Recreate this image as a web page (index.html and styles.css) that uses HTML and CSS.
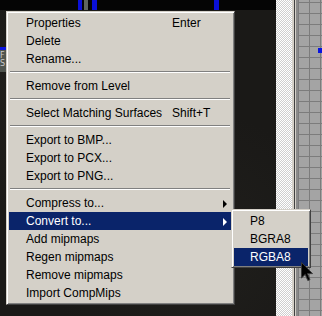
FILE: index.html
```html
<!DOCTYPE html>
<html>
<head>
<meta charset="utf-8">
<link rel="stylesheet" href="styles.css">
</head>
<body>
<div class="scene">
  <div class="viewport">
    <div class="topstrip">
      <span class="tb tb-blue1"></span>
      <span class="tb tb-gray"></span>
      <span class="tb tb-blue2"></span>
      <span class="tb tb-blue3"></span>
    </div>
    <div class="leftpanel"><span class="lp-text">F<br>S</span></div>
  </div>
  <div class="checker"></div>
  <div class="divider"><span class="dv dv-a"></span><span class="dv dv-b"></span><span class="dv dv-c"></span></div>
  <div class="gridpane"><span class="gp-blue"></span></div>
</div>

<div class="menu main-menu">
  <div class="item"><span class="label">Properties</span><span class="key">Enter</span></div>
  <div class="item"><span class="label">Delete</span></div>
  <div class="item"><span class="label">Rename...</span></div>
  <div class="sep"></div>
  <div class="item"><span class="label">Remove from Level</span></div>
  <div class="sep"></div>
  <div class="item"><span class="label">Select Matching Surfaces</span><span class="key">Shift+T</span></div>
  <div class="sep"></div>
  <div class="item"><span class="label">Export to BMP...</span></div>
  <div class="item"><span class="label">Export to PCX...</span></div>
  <div class="item"><span class="label">Export to PNG...</span></div>
  <div class="sep"></div>
  <div class="item"><span class="label">Compress to...</span><span class="arrow"></span></div>
  <div class="item active"><span class="label">Convert to...</span><span class="arrow"></span></div>
  <div class="item"><span class="label">Add mipmaps</span></div>
  <div class="item"><span class="label">Regen mipmaps</span></div>
  <div class="item"><span class="label">Remove mipmaps</span></div>
  <div class="item"><span class="label">Import CompMips</span></div>
</div>

<div class="menu sub-menu">
  <div class="item"><span class="label">P8</span></div>
  <div class="item"><span class="label">BGRA8</span></div>
  <div class="item active"><span class="label">RGBA8</span></div>
</div>

<svg class="cursor" width="12" height="20" viewBox="0 0 12 20">
  <path d="M0.5 0.5 L0.5 16 L4.2 12.4 L6.8 18.5 L9 17.6 L6.5 11.6 L11.5 11.6 Z" fill="#000" stroke="#3a3a3a" stroke-width="1"/>
</svg>
</body>
</html>
```

FILE: styles.css
```css
html, body {
  margin: 0;
  padding: 0;
  width: 322px;
  height: 316px;
  overflow: hidden;
  background: #1b1a18;
}

.scene {
  display: flex;
  width: 322px;
  height: 316px;
}

.viewport {
  flex: 0 0 276px;
  position: relative;
  background:
    radial-gradient(circle at 20% 30%, #22211e 0, transparent 40%),
    radial-gradient(circle at 70% 80%, #201f1c 0, transparent 45%),
    #1a1917;
}

.topstrip {
  height: 10px;
  background: #050505;
  position: relative;
}

.tb {
  position: absolute;
  top: 0;
  height: 10px;
}
.tb-blue1 { left: 78px; width: 4px; background: #0a10d8; }
.tb-gray  { left: 84px; width: 4px; background: #5f655f; }
.tb-blue2 { left: 92px; width: 5px; background: #0a10d8; }
.tb-blue3 { left: 214px; width: 5px; background: #0a10d8; }

.leftpanel {
  position: absolute;
  left: 0;
  top: 47px;
  width: 6px;
  height: 22px;
  background: #50554f;
  border-top: 3px solid #0a14e0;
  overflow: hidden;
}
.lp-text {
  display: block;
  font: 8px/8px "DejaVu Sans", sans-serif;
  color: #c8c8c8;
  margin-left: 0;
  padding-top: 2px;
}

.checker {
  flex: 0 0 16px;
  background-color: #ffffff;
  background-image:
    linear-gradient(45deg, #cfcfcf 25%, transparent 25%, transparent 75%, #cfcfcf 75%),
    linear-gradient(45deg, #cfcfcf 25%, transparent 25%, transparent 75%, #cfcfcf 75%);
  background-size: 2px 2px;
  background-position: 0 0, 1px 1px;
}

.divider {
  flex: 0 0 6px;
  display: flex;
  background: #d4d0c8;
}
.dv { display: block; height: 100%; }
.dv-a { width: 2px; background: #d4d0c8; }
.dv-b { width: 1px; background: #404040; }
.dv-c { width: 3px; background: #8a8a8a; border-left: 1px solid #d4d0c8; box-sizing: border-box; }

.gridpane {
  flex: 1;
  position: relative;
  background-color: #a4a4a4;
  background-image:
    linear-gradient(to right, #7c7c7c 1px, transparent 1px),
    linear-gradient(to bottom, #7c7c7c 1px, transparent 1px);
  background-size: 11px 11px;
  background-position: 0 2px;
}
.gp-blue {
  position: absolute;
  right: 0;
  top: 48px;
  width: 4px;
  height: 5px;
  background: #0a14e0;
}

/* Menus */
.menu {
  position: absolute;
  box-sizing: border-box;
  background: #d4d0c8;
  border: 1px solid;
  border-color: #d4d0c8 #404040 #404040 #d4d0c8;
  box-shadow: inset 1px 1px 0 #ffffff, inset -1px -1px 0 #808080;
  padding: 2px 3px 2px 2px;
  font-family: "Liberation Sans", Arial, sans-serif;
  font-size: 12px;
  color: #000;
}

.main-menu {
  left: 6px;
  top: 11px;
  width: 229px;
  height: 294px;
}

.sub-menu {
  left: 231px;
  top: 209px;
  width: 80px;
  height: 59px;
  padding: 2px 2px 1px 2px;
}

.item {
  height: 18px;
  display: flex;
  align-items: center;
  padding-left: 17px;
  position: relative;
  white-space: nowrap;
}

.item .label {
  width: 146px;
  flex: 0 0 auto;
}

.sub-menu .item {
  padding-left: 16px;
}
.sub-menu .item .label { width: auto; }

.item.active {
  background: #0a246a;
  color: #ffffff;
}

.arrow {
  position: absolute;
  left: 214px;
  top: 6px;
  width: 0;
  height: 0;
  border-top: 4px solid transparent;
  border-bottom: 4px solid transparent;
  border-left: 4px solid #000;
}
.item.active .arrow { border-left-color: #ffffff; }

.sep {
  height: 9px;
  position: relative;
  margin: 0 1px;
}
.sep::before {
  content: "";
  position: absolute;
  left: 0;
  right: 0;
  top: 3px;
  height: 1px;
  background: #808080;
  box-shadow: 0 1px 0 #ffffff;
}

.cursor {
  position: absolute;
  left: 301px;
  top: 262px;
}
```
